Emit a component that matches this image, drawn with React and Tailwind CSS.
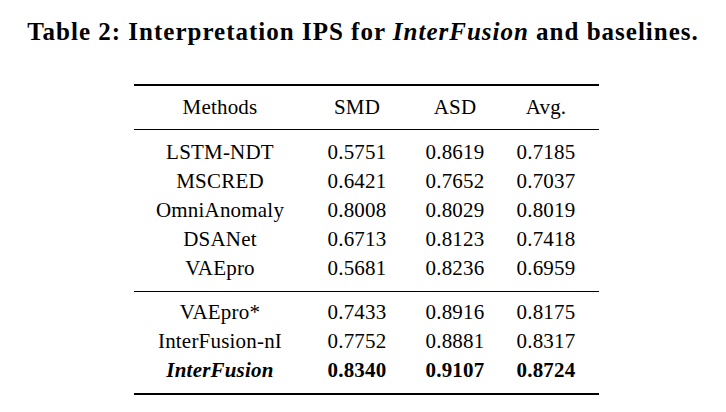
export default function App() {
  const top = [
    ["LSTM-NDT", "0.5751", "0.8619", "0.7185"],
    ["MSCRED", "0.6421", "0.7652", "0.7037"],
    ["OmniAnomaly", "0.8008", "0.8029", "0.8019"],
    ["DSANet", "0.6713", "0.8123", "0.7418"],
    ["VAEpro", "0.5681", "0.8236", "0.6959"],
  ];
  const bottom = [
    ["VAEpro*", "0.7433", "0.8916", "0.8175"],
    ["InterFusion-nI", "0.7752", "0.8881", "0.8317"],
  ];
  const Row = ({ r, bold }) => (
    <div className={"grid grid-cols-[172px_102px_94px_88px] pr-[9px] text-center leading-[29px] h-[29px]" + (bold ? " font-bold" : "")}>
      <div className={bold ? "italic" : ""}>{r[0]}</div>
      <div>{r[1]}</div>
      <div>{r[2]}</div>
      <div>{r[3]}</div>
    </div>
  );
  return (
    <div className="w-[726px] h-[412px] bg-white text-black font-[Liberation_Serif,serif] overflow-hidden">
      <h1 className="pt-[17px] text-center text-[25px] font-bold leading-[30px] tracking-[1px]">
        Table 2: Interpretation IPS for <i>InterFusion</i> and baselines.
      </h1>
      <div className="ml-[134px] w-[465px] mt-[37px] text-[21px] tracking-[0.2px]">
        <div className="border-t-2 border-black pt-[7px] pb-[7px]">
          <Row r={["Methods", "SMD", "ASD", "Avg."]} />
        </div>
        <div className="border-t border-black pt-[8px] pb-[8px]">
          {top.map((r) => (
            <Row key={r[0]} r={r} />
          ))}
        </div>
        <div className="border-t border-black pt-[6px] pb-[8px] border-b-2">
          {bottom.map((r) => (
            <Row key={r[0]} r={r} />
          ))}
          <Row r={["InterFusion", "0.8340", "0.9107", "0.8724"]} bold />
        </div>
      </div>
    </div>
  );
}
